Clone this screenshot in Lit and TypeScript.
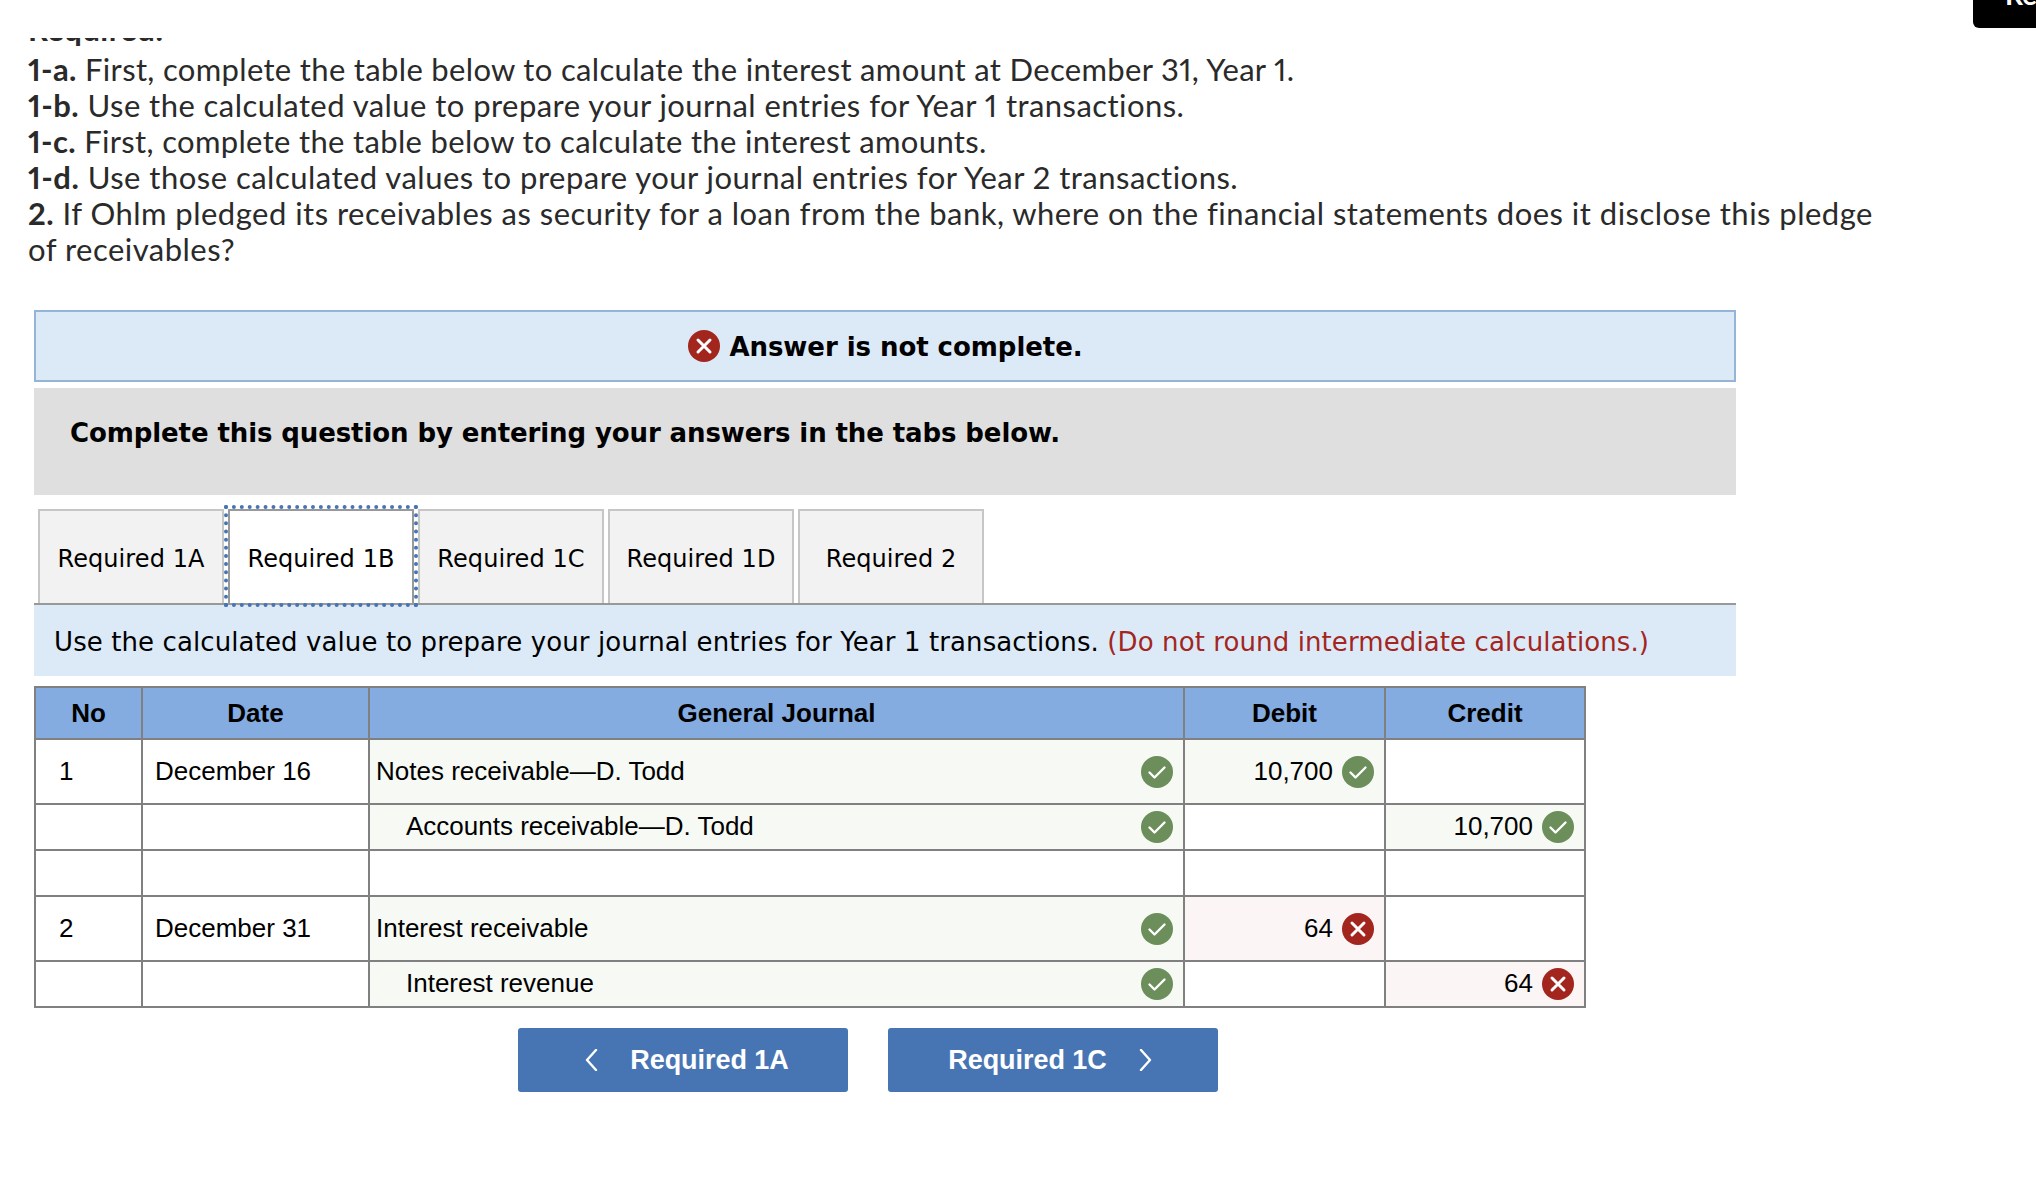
import { LitElement, html, css } from "lit";
import { customElement } from "lit/decorators.js";

const check = html`<svg class="ic" viewBox="0 0 32 32"><circle cx="16" cy="16" r="16" fill="#6b8e5a"/><path d="M8.5 16.5l5 5 10-10" fill="none" stroke="#fff" stroke-width="2.4" stroke-linecap="round" stroke-linejoin="round"/></svg>`;
const cross = html`<svg class="ic" viewBox="0 0 32 32"><circle cx="16" cy="16" r="16" fill="#a3261e"/><path d="M10 10l12 12M22 10l-12 12" fill="none" stroke="#fff" stroke-width="3" stroke-linecap="round"/></svg>`;

type Row = { no: string; date: string; acct: string; indent?: boolean; debit?: string; credit?: string; ok?: boolean; h: string };
const rows: Row[] = [
  { no: "1", date: "December 16", acct: "Notes receivable—D. Todd", debit: "10,700", ok: true, h: "tall" },
  { no: "", date: "", acct: "Accounts receivable—D. Todd", indent: true, credit: "10,700", ok: true, h: "short" },
  { no: "", date: "", acct: "", h: "short" },
  { no: "2", date: "December 31", acct: "Interest receivable", debit: "64", ok: false, h: "tall" },
  { no: "", date: "", acct: "Interest revenue", indent: true, credit: "64", ok: false, h: "short" },
];

@customElement("app-root")
export class AppRoot extends LitElement {
  static styles = css`
    :host { display: block; position: relative; height: 1202px; overflow: hidden; background: #fff; font-family: "Lato", sans-serif; color: #000; }
    .corner { position: absolute; top: 0; right: 0; width: 63px; height: 28px; background: #000; border-bottom-left-radius: 6px; overflow: hidden; }
    .corner span { position: absolute; left: 32px; top: -23px; color: #fff; font: bold 28px "Lato", sans-serif; }
    .page { padding: 38px 0 0 34px; width: 1702px; }
    .intro { margin-left: -6px; width: 1880px; font-size: 31px; line-height: 36px; color: #2a2a2a; letter-spacing: 0.45px; font-variant-numeric: proportional-nums; font-variant-ligatures: none; }
    .clip { height: 13px; overflow: hidden; }
    .clip b { display: block; margin-top: -27px; }
    .intro div.ln { white-space: nowrap; }
    .intro div.tight { letter-spacing: 0.33px; }
    .intro div.wide { letter-spacing: 0.48px; }
    .answer { margin-top: 43px; height: 72px; box-sizing: border-box; border: 2px solid #94b4d8; background: #dceaf8; display: flex; align-items: center; justify-content: center; gap: 9px; padding: 1px 0 0 1px; font: bold 26px "DejaVu Sans", sans-serif; letter-spacing: -0.05px; }
    .answer .ic { margin-top: -1px; }
    .ic { width: 32px; height: 32px; flex: none; display: block; }
    .complete { margin-top: 6px; height: 107px; box-sizing: border-box; background: #dfdfdf; padding: 29px 36px; font: bold 26px/32px "DejaVu Sans", sans-serif; letter-spacing: -0.1px; }
    .tabs { margin-top: 14px; display: flex; gap: 4px; padding-left: 4px; border-bottom: 2px solid #999; font: 24px "DejaVu Sans", sans-serif; letter-spacing: 0.08px; }
    .tab { width: 186px; height: 94px; box-sizing: border-box; border: 2px solid #c6c6c6; border-bottom: 0; background: #f2f2f2; display: flex; align-items: center; justify-content: center; padding-top: 4px; }
    .tab.on { background: #fff; border-color: #999; outline: 4px dotted #4775b4; outline-offset: 0; position: relative; }
    .band { background: #dceaf8; height: 71px; display: flex; align-items: center; padding: 2px 0 0 20px; box-sizing: border-box; font: 26px "DejaVu Sans", sans-serif; letter-spacing: 0.1px; white-space: pre; }
    .band em { font-style: normal; color: #a3261e; }
    table { margin-top: 10px; width: 1550px; table-layout: fixed; border-collapse: collapse; font: 26px "Liberation Sans", sans-serif; }
    th, td { border: 2px solid #808080; padding: 0; }
    th { background: #84ace0; font-weight: bold; height: 50px; text-align: center; }
    tr.tall td { height: 63px; }
    tr.short td { height: 44px; }
    tr.short .txt { position: relative; top: -1px; }
    .no { padding-left: 23px; }
    .date { padding-left: 12px; }
    .cell { display: flex; align-items: center; justify-content: space-between; padding: 0 10px 0 6px; }
    .cell.ind { padding-left: 36px; }
    .num { display: flex; align-items: center; justify-content: flex-end; gap: 9px; padding-right: 10px; }
    td.good { background: #f6f9f4; }
    td.bad { background: #fbf5f5; }
    .nav { margin: 20px 0 0 484px; display: flex; gap: 40px; }
    .btn { width: 330px; height: 64px; box-sizing: border-box; border-radius: 3px; background: #4775b4; color: #fff; display: flex; align-items: center; justify-content: center; gap: 32px; font: bold 27px "Liberation Sans", sans-serif; letter-spacing: -0.05px; }
    .btn.prev { padding-left: 7px; }
    .btn.next { padding-right: 5px; }
    .btn svg { width: 14px; height: 22px; flex: none; }
  `;

  private amount(v: string | undefined, ok: boolean | undefined) {
    if (!v) return html`<td></td>`;
    return html`<td class=${ok ? "good" : "bad"}><div class="num"><span class="txt">${v}</span>${ok ? check : cross}</div></td>`;
  }

  render() {
    return html`
      <div class="corner"><span>Re</span></div>
      <div class="page">
        <div class="intro">
          <div class="clip"><b>Required:</b></div>
          <div class="ln tight"><b>1-a.</b> First, complete the table below to calculate the interest amount at December 31, Year 1.</div>
          <div class="ln"><b>1-b.</b> Use the calculated value to prepare your journal entries for Year 1 transactions.</div>
          <div class="ln tight"><b>1-c.</b> First, complete the table below to calculate the interest amounts.</div>
          <div class="ln wide"><b>1-d.</b> Use those calculated values to prepare your journal entries for Year 2 transactions.</div>
          <div class="ln wide"><b>2.</b> If Ohlm pledged its receivables as security for a loan from the bank, where on the financial statements does it disclose this pledge</div>
          <div class="ln wide">of receivables?</div>
        </div>
        <div class="answer">${cross}<span>Answer is not complete.</span></div>
        <div class="complete">Complete this question by entering your answers in the tabs below.</div>
        <div class="tabs">
          ${["Required 1A", "Required 1B", "Required 1C", "Required 1D", "Required 2"].map(
            (t, i) => html`<div class="tab ${i === 1 ? "on" : ""}">${t}</div>`
          )}
        </div>
        <div class="band">Use the calculated value to prepare your journal entries for Year 1 transactions. <em>(Do not round intermediate calculations.)</em></div>
        <table>
          <colgroup>
            <col style="width:107px" /><col style="width:227px" /><col style="width:815px" /><col style="width:201px" /><col style="width:200px" />
          </colgroup>
          <thead><tr><th>No</th><th>Date</th><th>General Journal</th><th>Debit</th><th>Credit</th></tr></thead>
          <tbody>
            ${rows.map(
              (r) => html`<tr class=${r.h}>
                <td class="no">${r.no}</td>
                <td class="date">${r.date}</td>
                <td class=${r.acct ? "good" : ""}>${r.acct
                  ? html`<div class="cell ${r.indent ? "ind" : ""}"><span class="txt">${r.acct}</span>${check}</div>`
                  : ""}</td>
                ${this.amount(r.debit, r.ok)}
                ${this.amount(r.credit, r.ok)}
              </tr>`
            )}
          </tbody>
        </table>
        <div class="nav">
          <div class="btn prev"><svg viewBox="0 0 14 22"><path d="M12 1L3 11l9 10" fill="none" stroke="#fff" stroke-width="2.4" stroke-linecap="round" stroke-linejoin="round"/></svg><span>Required 1A</span></div>
          <div class="btn next"><span>Required 1C</span><svg viewBox="0 0 14 22"><path d="M2 1l9 10-9 10" fill="none" stroke="#fff" stroke-width="2.4" stroke-linecap="round" stroke-linejoin="round"/></svg></div>
        </div>
      </div>
    `;
  }
}
